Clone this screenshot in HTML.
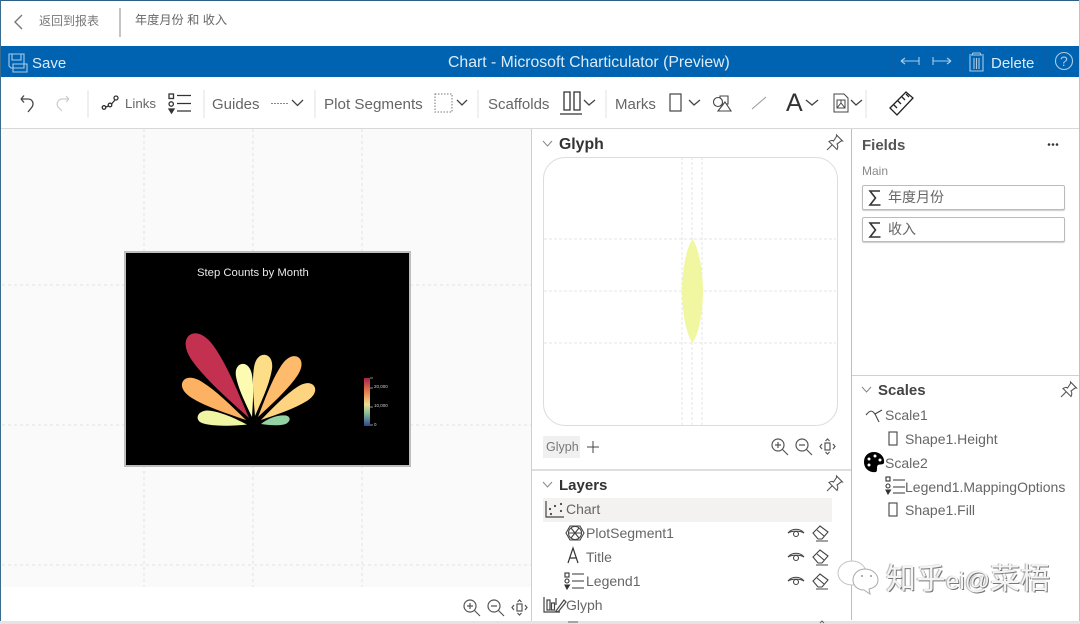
<!DOCTYPE html>
<html><head><meta charset="utf-8"><style>
html,body{margin:0;padding:0;background:#fff}
#p{position:relative;width:1080px;height:624px;overflow:hidden;background:#fff;font-family:"Liberation Sans","Noto Sans CJK SC",sans-serif;color:#555;filter:blur(.35px)}
.t{position:absolute;white-space:nowrap;line-height:1}
.b{position:absolute}
svg{position:absolute;left:0;top:0}
</style></head><body><div id="p">
<div class="b" style="left:0;top:0;width:1080px;height:1px;background:#2d5f86"></div>
<div class="b" style="left:0;top:0;width:1px;height:624px;background:#3a6c90"></div>
<div class="b" style="left:1079px;top:0;width:1px;height:624px;background:#b9c4cc"></div>
<div class="b" style="left:1px;top:46px;width:1078px;height:31px;background:#0063b1"></div>
<div class="b" style="left:1px;top:128px;width:1078px;height:1px;background:#d8d8d8"></div>
<div class="b" style="left:2px;top:129px;width:529px;height:458px;background:#fafafa"></div>
<div class="b" style="left:531px;top:129px;width:1px;height:495px;background:#cfcfcf"></div>
<div class="b" style="left:851px;top:129px;width:1px;height:491px;background:#bdbdbd"></div>
<div class="b" style="left:852px;top:375px;width:227px;height:1px;background:#d0d0d0"></div>
<div class="b" style="left:532px;top:469px;width:319px;height:2px;background:#dedede"></div>
<div class="b" style="left:0;top:621px;width:1080px;height:3px;background:#e4e4e4"></div>
<div class="b" style="left:543px;top:157px;height:269px;border:1px solid #dcdcdc;border-radius:22px;box-sizing:border-box;width:295px"></div>
<div class="b" style="left:543px;top:498px;width:289px;height:24px;background:#f3f2f1"></div>
<div class="b" style="left:543px;top:436px;width:37px;height:22px;background:#f0f0f0"></div>
<div class="b" style="left:862px;top:185px;width:203px;height:25px;border:1px solid #bbb;border-radius:2px;box-sizing:border-box;box-shadow:0 1px 1px #ccc"></div>
<div class="b" style="left:862px;top:217px;width:203px;height:25px;border:1px solid #bbb;border-radius:2px;box-sizing:border-box;box-shadow:0 1px 1px #ccc"></div>

<svg width="1080" height="624" viewBox="0 0 1080 624" fill="none">
<defs><linearGradient id="g" x1="0" y1="0" x2="0" y2="1"><stop offset="0" stop-color="#a8244c"/><stop offset=".3" stop-color="#e8824c"/><stop offset=".55" stop-color="#eadf90"/><stop offset=".75" stop-color="#7fb99a"/><stop offset="1" stop-color="#2f4393"/></linearGradient>
<path id="pt" d="M0,0 C-.24,-.28 -.5,-.55 -.5,-.78 C-.5,-.92 -.28,-1 0,-1 C.28,-1 .5,-.92 .5,-.78 C.5,-.55 .24,-.28 0,0Z"/></defs>
<!-- canvas grid -->
<g stroke="#e2e2e2" stroke-dasharray="3 3">
<path d="M144 129V587M253 129V587M362 129V587"/>
<path d="M2 285H531M2 425H531M2 565H531"/>
</g>
<rect x="125" y="252" width="285" height="214" fill="#000" stroke="#bdbdbd" stroke-width="2"/>
<!-- petals -->
<g>
<path d="M247,424.500 C235,426 208,427 200,422 C195,418 198,411 207,410.500 C220,411 236,419 247,424.500Z" fill="#eff5a3"/>
<use href="#pt" transform="translate(246,420) rotate(-58.500) scale(19,74)" fill="#fdb163"/>
<use href="#pt" transform="translate(249,418) rotate(-35.500) scale(26,102)" fill="#c4304f"/>
<use href="#pt" transform="translate(252,417) rotate(-11) scale(16,54)" fill="#fdfab2"/>
<use href="#pt" transform="translate(255,416) rotate(9.500) scale(18,62)" fill="#fedd87"/>
<use href="#pt" transform="translate(258,417) rotate(34) scale(19,72)" fill="#fdbb6b"/>
<use href="#pt" transform="translate(261,420) rotate(57.600) scale(17,63)" fill="#fed481"/>
<path d="M261,424 C268,418 278,414.500 286,415.500 C292,417 290,423 284,424.500 C276,426 268,425 261,424Z" fill="#93d2a3"/>
</g>
<rect x="364" y="378" width="6" height="48" fill="url(#g)"/>
<path d="M370 378h3M370 388h3M370 407h3M370 425h3" stroke="#bbb" stroke-width=".7"/>
<!-- glyph editor -->
<path d="M544 239H836M544 291H836M544 343H836" stroke="#e4e4e4" stroke-dasharray="3 2"/>
<path d="M682 157V426M692 157V426M702 157V426" stroke="#e6e6e6" stroke-dasharray="3 2"/>
<path d="M692.500 239C685 250 682 275 682 291C682 308 685 332 692.500 343C700 332 703 308 703 291C703 275 700 250 692.500 239Z" fill="#f0f7a0"/>
<!-- back -->
<path d="M22 15L15 22L22 29" stroke="#777" stroke-width="1.400"/>
<path d="M120 8V37" stroke="#888" stroke-width="1"/>
<!-- save icon -->
<g stroke="#a9cbe6" stroke-width="1.100"><path d="M9 54H24V68H11L9 66Z"/><path d="M12 54V60H21V54M13 72V64H27V72Z"/></g>
<!-- top right -->
<g stroke="#a9cbe6" stroke-width="1.100"><path d="M901 61H919M901 61L905 58M901 61L905 64M919 57V65"/><path d="M933 61H951M951 61L947 58M951 61L947 64M933 57V65"/>
<path d="M969 55H984M972 55L973 53H980L981 55M970 56V71H983V56M974 58V69M976.500 58V69M979 58V69"/><circle cx="1064" cy="61" r="8.500"/></g>
<path d="M893 47V76M962 47V76M1047 47V76" stroke="#1a5a96"/>
<!-- toolbar separators -->
<path d="M88 90V118M204 90V118M315 90V118M478 90V118M606 90V118M866 90V118" stroke="#e0e0e0"/>
<!-- undo redo -->
<path d="M21 99H28C33 99 34 104 32 107L28 112M21 99L24 95.500M21 99L24 102.500" stroke="#444" stroke-width="1.300"/>
<path d="M69 99H62C58 99 56 104 58 107L62 111M69 99L66 96M69 99L66 102" stroke="#ccc" stroke-width="1.200"/>
<!-- links -->
<g stroke="#333" stroke-width="1.300"><circle cx="104" cy="107.500" r="1.800"/><circle cx="110" cy="105" r="1.800"/><circle cx="116" cy="98" r="2"/><path d="M106 107L108.500 106M111.500 104L115 100"/></g>
<!-- legend icon -->
<g stroke="#333" stroke-width="1.300"><rect x="169" y="94" width="4.500" height="4.500"/><circle cx="171.200" cy="104" r="2.200"/><path d="M177 95.500H191M177 103.500H191M177 111H191"/><path d="M169 109H174L171.500 113Z" fill="#333"/></g>
<!-- guides dash -->
<path d="M271 103.500H288" stroke="#888" stroke-dasharray="2 1"/>
<path d="M292 100L297.500 105.500L303 100M457 100L462 105L467 100M584 100L589 105L595 100M689 100L694 105L700 100M806 100L812 105L818 100M851 100L856 105L862 100" stroke="#444" stroke-width="1.300"/>
<rect x="435" y="94" width="17" height="18" stroke="#777" stroke-dasharray="1.500 1.500"/>
<!-- scaffolds -->
<path d="M564 92V110H570V92ZM574 92V110H580V92ZM560 114H582" stroke="#333" stroke-width="1.300"/>
<!-- marks -->
<rect x="670" y="94" width="11" height="17" stroke="#444" stroke-width="1.200"/>
<g stroke="#444" stroke-width="1.100"><path d="M720 96L728 96L728 104L720 104Z"/><circle cx="718" cy="102" r="4.500" fill="#fff"/><path d="M725 102L731 111H718Z" fill="#fff"/></g>
<path d="M752 109L766 97" stroke="#999"/>
<g stroke="#444" stroke-width="1"><path d="M834 94H844L848 98V112H834Z"/><path d="M837 100H845V108H837ZM837 108L841 103L845 108M841 100V103"/></g>
<!-- ruler -->
<path d="M890 108L906 92L913 98L897 115ZM894 105L897 108M898 101L901 104M902 97L905 100M906 94L909 97" stroke="#222" stroke-width="1.300"/>
<!-- chevrons panel -->
<path d="M543 141L547.500 146L552 141M543 482L547.500 487L552 482M862 387L866.500 392L871 387" stroke="#888"/>
<!-- pins -->
<path transform="translate(826,134)" d="M1 16L6 11M3 7.500L11 15.500C12 13.500 12 11.500 11 10L15 7L16.500 7L10.500 1L10.500 2.500L7.500 7C6 6 5 6.500 3 7.500Z" stroke="#555" stroke-width="1.100"/>
<path transform="translate(826,475)" d="M1 16L6 11M3 7.500L11 15.500C12 13.500 12 11.500 11 10L15 7L16.500 7L10.500 1L10.500 2.500L7.500 7C6 6 5 6.500 3 7.500Z" stroke="#555" stroke-width="1.100"/>
<path transform="translate(1060,381)" d="M1 16L6 11M3 7.500L11 15.500C12 13.500 12 11.500 11 10L15 7L16.500 7L10.500 1L10.500 2.500L7.500 7C6 6 5 6.500 3 7.500Z" stroke="#555" stroke-width="1.100"/>
<!-- dots -->
<g fill="#333"><circle cx="1049" cy="144.500" r="1.300"/><circle cx="1053" cy="144.500" r="1.300"/><circle cx="1057" cy="144.500" r="1.300"/></g>
<!-- plus -->
<path d="M593 441V453M587 447H599" stroke="#444"/>
<!-- zoom icons -->
<g stroke="#555" stroke-width="1.200"><circle cx="778" cy="445" r="6"/><path d="M782.500 449.500L788 455M775 445H781M778 442V448"/><circle cx="802" cy="445" r="6"/><path d="M806.500 449.500L812 455M799 445H805"/><rect x="825" y="443" width="5" height="7"/><path d="M822 444L820 446.500L822 449M833 444L835 446.500L833 449M825.500 441L827.500 439L829.500 441M825.500 452L827.500 454L829.500 452"/></g>
<g stroke="#555" stroke-width="1.200" transform="translate(-308,161)"><circle cx="778" cy="445" r="6"/><path d="M782.500 449.500L788 455M775 445H781M778 442V448"/><circle cx="802" cy="445" r="6"/><path d="M806.500 449.500L812 455M799 445H805"/><rect x="825" y="443" width="5" height="7"/><path d="M822 444L820 446.500L822 449M833 444L835 446.500L833 449M825.500 441L827.500 439L829.500 441M825.500 452L827.500 454L829.500 452"/></g>
<!-- sigma -->
<path d="M880 191H870L875.500 198L870 205H880.500" stroke="#333" stroke-width="1.600"/>
<path d="M880 223H870L875.500 230L870 237H880.500" stroke="#333" stroke-width="1.600"/>
<!-- layers icons -->
<path d="M546 501V517H564" stroke="#444" stroke-width="1.200"/>
<g fill="#444"><circle cx="550" cy="509" r="1.100"/><circle cx="555" cy="506" r="1.100"/><circle cx="561" cy="504" r="1.100"/><circle cx="551" cy="514" r="1.100"/><circle cx="561" cy="511" r="1.100"/></g>
<g stroke="#444" stroke-width="1.100"><path d="M566 533L570 526H580L584 533L580 540H570Z"/><circle cx="575" cy="533" r="6.500"/><path d="M568.500 533H581.500M575 533L571 528M575 533L579 528M575 533L571 538M575 533L579 538"/></g>
<path d="M568 563L573 548L578 563M570 558H576" stroke="#333" stroke-width="1.200"/>
<g stroke="#333" stroke-width="1.100"><rect x="565" y="573" width="4" height="4"/><circle cx="567" cy="581" r="2"/><path d="M565 585H569.500L567 589Z" fill="#333"/><path d="M572 574H584M572 581H584M572 588H584"/></g>
<g stroke="#444" stroke-width="1.200"><path d="M544 597V612H560"/><path d="M547 600V610H550V600ZM551.500 603V610H554.500V603ZM556 598V605"/><path d="M556 611L564 600L566 602L558 612Z"/></g>
<!-- eye & eraser -->
<g stroke="#444" stroke-width="1.100"><path d="M788 533C792 528 800 528 804 533C800 530.500 792 530.500 788 533Z"/><circle cx="796" cy="534" r="2.500"/><path d="M813 533L820 526L828 532L822 539H818ZM817 530L824 536M816 541H828"/></g>
<g stroke="#444" stroke-width="1.100" transform="translate(0,24)"><path d="M788 533C792 528 800 528 804 533C800 530.500 792 530.500 788 533Z"/><circle cx="796" cy="534" r="2.500"/><path d="M813 533L820 526L828 532L822 539H818ZM817 530L824 536M816 541H828"/></g>
<g stroke="#444" stroke-width="1.100" transform="translate(0,48)"><path d="M788 533C792 528 800 528 804 533C800 530.500 792 530.500 788 533Z"/><circle cx="796" cy="534" r="2.500"/><path d="M813 533L820 526L828 532L822 539H818ZM817 530L824 536M816 541H828"/></g>
<path d="M568 622H578M820 623L822 621L824 623" stroke="#666"/>
<!-- scales icons -->
<path d="M866 415C870 410 872 410 875 414C877 418 878 420 879 422M875 414L882 410" stroke="#444" stroke-width="1.100"/>
<rect x="889" y="432" width="8" height="13" stroke="#444" stroke-width="1.100"/>
<rect x="889" y="503" width="8" height="13" stroke="#444" stroke-width="1.100"/>
<path d="M874 452C880 452 885 457 884 463C883 465 880 464 878 465C876 467 878 470 876 472C870 473 864 469 864 462C864 456 868 452 874 452Z" fill="#000"/>
<g fill="#fff"><circle cx="869" cy="459" r="1.500"/><circle cx="875" cy="456" r="1.500"/><circle cx="880" cy="460" r="1.500"/><circle cx="869" cy="465" r="1.500"/></g>
<g stroke="#333" stroke-width="1.100"><rect x="886" y="477" width="4" height="4"/><circle cx="888" cy="486" r="2"/><path d="M886 490H890.500L888 494Z" fill="#333"/><path d="M893 480H905M893 487H905M893 493H905"/></g>
<!-- wechat -->
<ellipse cx="852" cy="573" rx="14" ry="12" fill="#fff" stroke="#c4c4c4"/>
<path d="M865 569C858 569 853 574 853 580C853 586 858 590 864 590L870 594L869 589C874 588 878 585 878 580C878 574 872 569 865 569Z" stroke="#aaa" fill="#fff"/>
<circle cx="862" cy="576" r="1" fill="#999"/><circle cx="871" cy="576" r="1" fill="#999"/>
</svg>

<div class="t" style="left:39px;top:15px;font-size:12px;color:#777">返回到报表</div>
<div class="t" style="left:135px;top:14px;font-size:12.200px;color:#666">年度月份 和 收入</div>
<div class="t" style="left:32px;top:56px;font-size:15px;color:#dcebf7">Save</div>
<div class="t" style="left:448px;top:55px;font-size:15.800px;color:#dcebf7">Chart - Microsoft Charticulator (Preview)</div>
<div class="t" style="left:991px;top:56px;font-size:15px;color:#dcebf7">Delete</div>
<div class="t" style="left:1060px;top:54px;font-size:14px;color:#a9cbe6">?</div>
<div class="t" style="left:125px;top:97px;font-size:13.300px;color:#666">Links</div>
<div class="t" style="left:212px;top:97px;font-size:15px;color:#666">Guides</div>
<div class="t" style="left:324px;top:97px;font-size:15.200px;color:#666">Plot Segments</div>
<div class="t" style="left:488px;top:97px;font-size:15px;color:#666">Scaffolds</div>
<div class="t" style="left:615px;top:97px;font-size:15px;color:#666">Marks</div>
<div class="t" style="left:786px;top:91px;font-size:25px;color:#333">A</div>
<div class="t" style="left:197px;top:268px;font-size:11.300px;color:#e8e8e8">Step Counts by Month</div>
<div class="t" style="left:374px;top:385px;font-size:4.500px;color:#ccc">20,000</div>
<div class="t" style="left:374px;top:404px;font-size:4.500px;color:#ccc">10,000</div>
<div class="t" style="left:374px;top:423px;font-size:4.500px;color:#ccc">0</div>
<div class="t" style="left:559px;top:137px;font-size:15.800px;font-weight:bold;color:#333">Glyph</div>
<div class="t" style="left:862px;top:138px;font-size:15px;font-weight:bold;color:#555">Fields</div>
<div class="t" style="left:862px;top:165px;font-size:12px;color:#888">Main</div>
<div class="t" style="left:888px;top:190px;font-size:14px;color:#666">年度月份</div>
<div class="t" style="left:888px;top:222px;font-size:14px;color:#666">收入</div>
<div class="t" style="left:878px;top:383px;font-size:15px;font-weight:bold;color:#444">Scales</div>
<div class="t" style="left:885px;top:408px;font-size:14px;color:#666">Scale1</div>
<div class="t" style="left:905px;top:432px;font-size:14px;color:#666">Shape1.Height</div>
<div class="t" style="left:885px;top:456px;font-size:14px;color:#666">Scale2</div>
<div class="t" style="left:905px;top:480px;font-size:14px;color:#666">Legend1.MappingOptions</div>
<div class="t" style="left:905px;top:503px;font-size:14px;color:#666">Shape1.Fill</div>
<div class="t" style="left:546px;top:441px;font-size:12.500px;color:#777">Glyph</div>
<div class="t" style="left:559px;top:478px;font-size:15px;font-weight:bold;color:#333">Layers</div>
<div class="t" style="left:566px;top:502px;font-size:14px;color:#666">Chart</div>
<div class="t" style="left:586px;top:526px;font-size:14px;color:#666">PlotSegment1</div>
<div class="t" style="left:586px;top:550px;font-size:14px;color:#666">Title</div>
<div class="t" style="left:586px;top:574px;font-size:14px;color:#666">Legend1</div>
<div class="t" style="left:566px;top:598px;font-size:14px;color:#666">Glyph</div>
<div class="t" style="left:886px;top:565px;font-size:30px;color:#f4f4f4;text-shadow:1px 1px 0 #777,-1px 0 1px #aaa">知乎<span style="font-size:24px">ei</span><span style="font-size:25px">@</span>菜梧</div>
</div></body></html>
